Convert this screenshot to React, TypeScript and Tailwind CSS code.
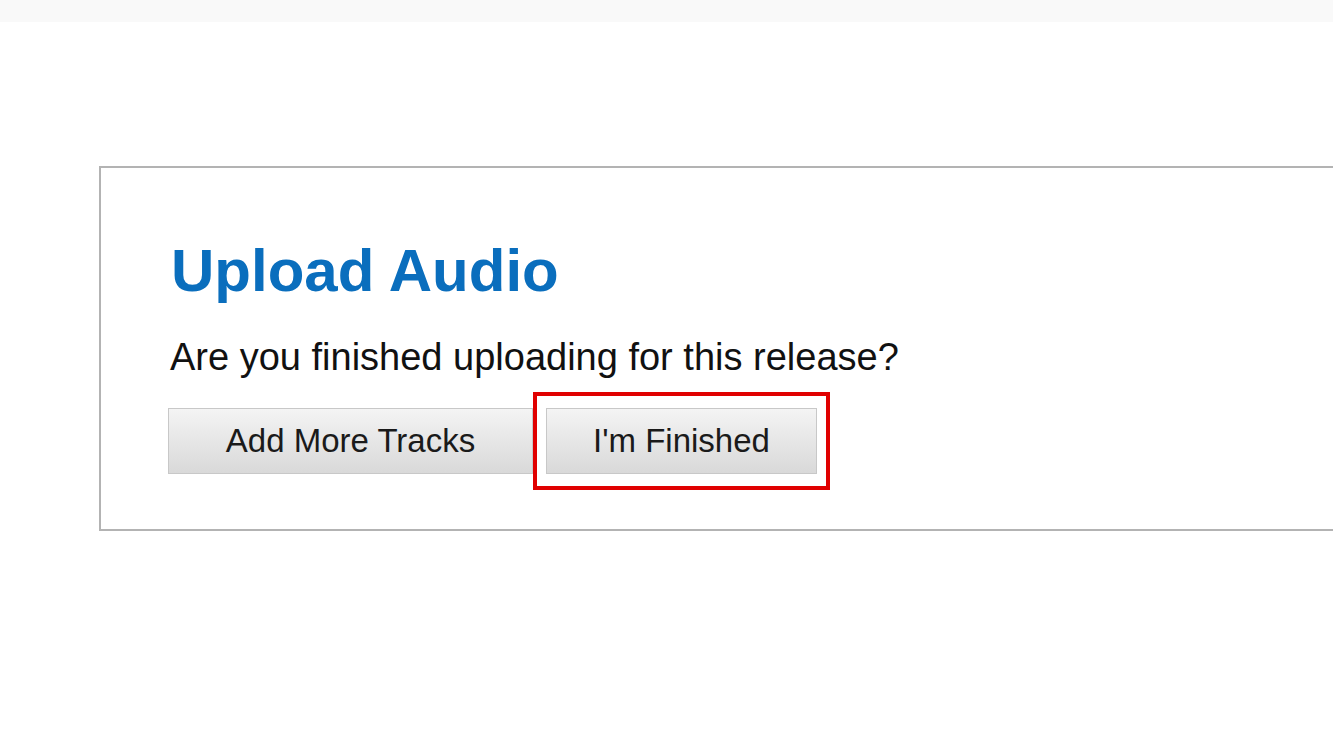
import React from 'react';

const font = { fontFamily: '"Liberation Sans", Arial, sans-serif' };

export default function App() {
  return (
    <div className="w-[1333px] h-[750px] overflow-hidden bg-white" style={font}>
      {/* top strip */}
      <div className="h-[22px] bg-[#f9f9f9]" />

      {/* upload panel */}
      <div className="mt-[144px] ml-[99px] w-[1300px] border-2 border-[#b3b3b3] pl-[67px] pt-[73px] pb-[39px]">
        <h1 className="ml-[3px] text-[60px] leading-none font-bold text-[#0a6ebd]">Upload Audio</h1>
        <p className="ml-[2px] mt-[37px] text-[38px] leading-none text-[#111]">Are you finished uploading for this release?</p>

        <div className="mt-[16px] flex items-center">
          <button className="w-[365px] h-[66px] border border-[#c8c8c8] bg-gradient-to-b from-[#f4f4f4] to-[#d9d9d9] text-[33px] text-[#1a1a1a]">
            Add More Tracks
          </button>
          <div className="border-4 border-[#e00000] px-[9px] py-[12px]">
            <button className="w-[271px] h-[66px] border border-[#c8c8c8] bg-gradient-to-b from-[#f4f4f4] to-[#d9d9d9] text-[33px] text-[#1a1a1a]">
              I'm Finished
            </button>
          </div>
        </div>
      </div>
    </div>
  );
}
